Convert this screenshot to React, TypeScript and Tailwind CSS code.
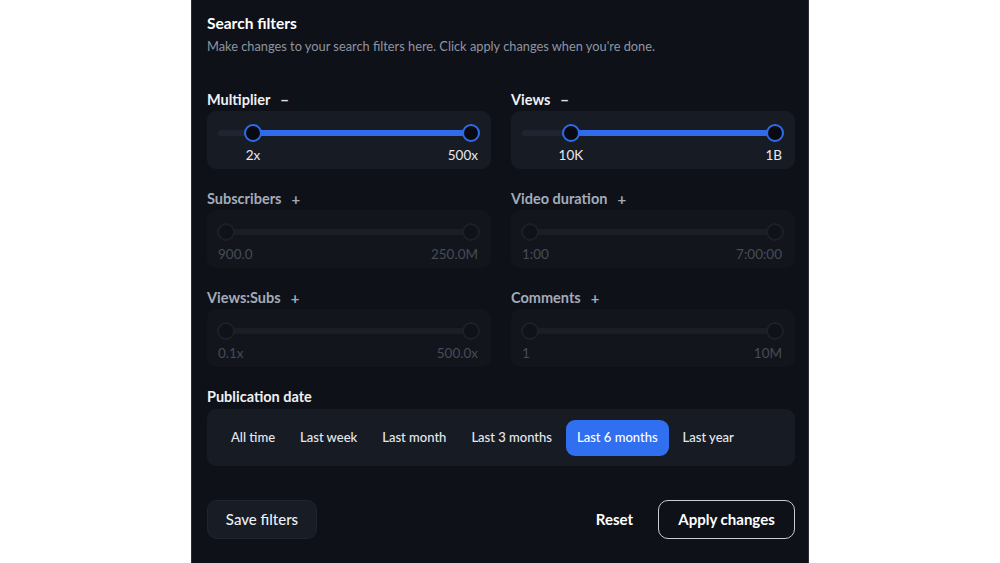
import React from "react"

type Range = {
  label: string
  active: boolean
  min: number
  max: number
  minText: string
  maxText: string
  minAlign: "center" | "start"
}

const ranges: Range[] = [
  { label: "Multiplier", active: true, min: 11, max: 100, minText: "2x", maxText: "500x", minAlign: "center" },
  { label: "Views", active: true, min: 16.7, max: 100, minText: "10K", maxText: "1B", minAlign: "center" },
  { label: "Subscribers", active: false, min: 0, max: 100, minText: "900.0", maxText: "250.0M", minAlign: "start" },
  { label: "Video duration", active: false, min: 0, max: 100, minText: "1:00", maxText: "7:00:00", minAlign: "start" },
  { label: "Views:Subs", active: false, min: 0, max: 100, minText: "0.1x", maxText: "500.0x", minAlign: "start" },
  { label: "Comments", active: false, min: 0, max: 100, minText: "1", maxText: "10M", minAlign: "start" },
]

const dates = ["All time", "Last week", "Last month", "Last 3 months", "Last 6 months", "Last year"]

function Thumb({ pos, active }: { pos: number; active: boolean }) {
  return (
    <div
      className={`absolute top-1/2 size-[18px] -translate-x-1/2 -translate-y-1/2 rounded-full border-2 ${
        active ? "border-[#2f6bea] bg-[#070a10]" : "border-[#1c2028] bg-[#0f1218]"
      }`}
      style={{ left: `${pos}%` }}
    />
  )
}

function RangeFilter({ r }: { r: Range }) {
  return (
    <div>
      <div className="mb-[1px] flex h-5 items-center gap-[10px]">
        <span className={`text-[14.5px] font-bold ${r.active ? "text-[#eef0f4]" : "text-[#a3abb8]"}`}>
          {r.label}
        </span>
        <span className={`text-[15px] font-bold ${r.active ? "text-[#d7dbe2]" : "text-[#a3abb8]"}`}>
          {r.active ? "−" : "+"}
        </span>
      </div>
      <div className={`h-[58px] rounded-[9px] px-[11px] pt-[13px] ${r.active ? "bg-[#171b24]" : "bg-[#12151c]"}`}>
        <div className="relative h-[18px]">
          <div className={`absolute inset-x-0 top-1/2 h-[6px] -translate-y-1/2 rounded-full ${r.active ? "bg-[#1f2530]" : "bg-[#1b1e26]"}`} />
          <div className="absolute inset-y-0 left-[8px] right-[9px]">
            {r.active && (
              <div
                className="absolute top-1/2 h-[6px] -translate-y-1/2 bg-[#2f6bea]"
                style={{ left: `${r.min}%`, right: `${100 - r.max}%` }}
              />
            )}
            <Thumb pos={r.min} active={r.active} />
            <Thumb pos={r.max} active={r.active} />
          </div>
        </div>
        <div className={`relative mt-[5px] h-[16px] text-[13.5px] leading-[16px] ${r.active ? "text-[#e6e9ee]" : "text-[#464c58]"}`}>
          {r.minAlign === "center" ? (
            <div className="absolute inset-y-0 left-[8px] right-[9px]">
              <span className="absolute -translate-x-1/2" style={{ left: `${r.min}%` }}>
                {r.minText}
              </span>
            </div>
          ) : (
            <span className="absolute left-0">{r.minText}</span>
          )}
          <span className="absolute right-[2px]">{r.maxText}</span>
        </div>
      </div>
    </div>
  )
}

export default function App() {
  return (
    <div className="min-h-[563px] w-full bg-white" style={{ fontFamily: "Lato, 'Noto Sans', sans-serif" }}>
      <div className="mx-auto flex h-[563px] w-[618px] flex-col border-x border-[#2a2e36] bg-[#0e1118] pl-[15px] pr-[13px] pt-[13px]">
        <h1 className="h-5 text-[15.5px] font-bold leading-5 text-white">Search filters</h1>
        <p className="mt-[5px] h-4 text-[12.8px] leading-4 text-[#8e95a1]">
          Make changes to your search filters here. Click apply changes when you're done.
        </p>

        <div className="mt-[36px] grid grid-cols-2 gap-x-[20px] gap-y-[20px]">
          {ranges.map((r) => (
            <RangeFilter key={r.label} r={r} />
          ))}
        </div>

        <div className="mt-[20px]">
          <div className="mb-[2px] flex h-5 items-center text-[14.5px] font-bold text-[#eef0f4]">Publication date</div>
          <div className="flex h-[57px] items-center gap-[3px] rounded-[9px] bg-[#171b24] px-[13px]">
            {dates.map((d) => (
              <button
                key={d}
                className={`h-[36px] rounded-[9px] px-[11px] text-[13px] font-medium ${
                  d === "Last 6 months" ? "bg-[#2f6ff0] text-white" : "text-[#e6e9ee]"
                }`}
              >
                {d}
              </button>
            ))}
          </div>
        </div>

        <div className="mt-[34px] flex items-center">
          <button className="h-[39px] w-[110px] rounded-[10px] border border-[#1f2430] bg-[#181c25] text-[15px] font-medium text-[#eef0f4]">
            Save filters
          </button>
          <div className="ml-auto flex items-center gap-[13px]">
            <button className="px-[12px] text-[15px] font-bold text-white">Reset</button>
            <button className="h-[39px] w-[137px] rounded-[10px] border border-[#c9ccd2] text-[15px] font-bold text-white">
              Apply changes
            </button>
          </div>
        </div>
      </div>
    </div>
  )
}
